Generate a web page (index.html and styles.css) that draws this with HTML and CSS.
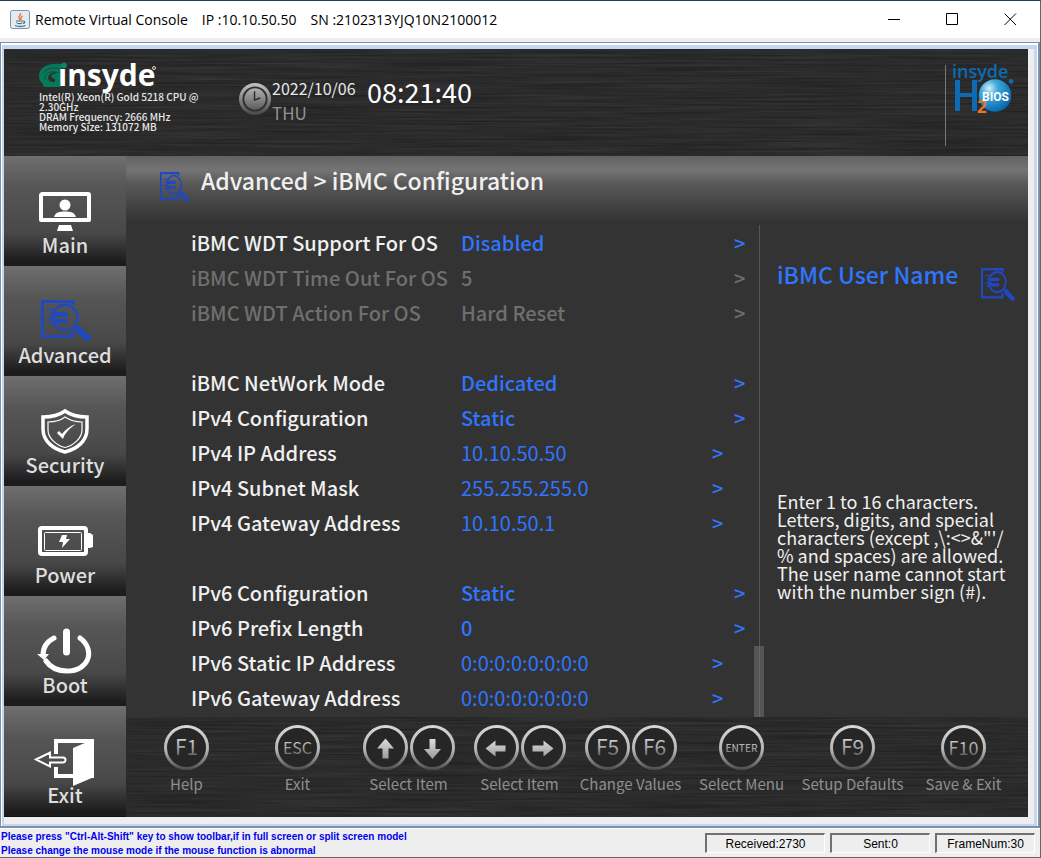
FILE: index.html
```html
<!DOCTYPE html>
<html lang="en">
<head>
<meta charset="utf-8">
<title>Remote Virtual Console</title>
<link rel="stylesheet" href="styles.css">
</head>
<body>
<svg class="defs" aria-hidden="true">
  <defs>
    <linearGradient id="metal" gradientUnits="userSpaceOnUse" x1="0" y1="0" x2="0" y2="46">
      <stop offset="0" stop-color="#d8d8d8"/><stop offset=".55" stop-color="#b4b4b4"/><stop offset=".85" stop-color="#6c6c6c"/><stop offset="1" stop-color="#444"/>
    </linearGradient>
    <linearGradient id="metal-text" gradientUnits="userSpaceOnUse" x1="0" y1="14" x2="0" y2="33">
      <stop offset="0" stop-color="#d0d0d0"/><stop offset=".5" stop-color="#a0a0a0"/><stop offset="1" stop-color="#4c4c4c"/>
    </linearGradient>
    <linearGradient id="metal-arrow" gradientUnits="userSpaceOnUse" x1="0" y1="14" x2="0" y2="38">
      <stop offset="0" stop-color="#ddd"/><stop offset="1" stop-color="#8a8a8a"/>
    </linearGradient>
    <linearGradient id="clock-metal" x1="0" y1="0" x2="0" y2="1">
      <stop offset="0" stop-color="#c4c4c4"/><stop offset="1" stop-color="#484848"/>
    </linearGradient>
    <radialGradient id="ball" cx=".32" cy=".28" r=".75">
      <stop offset="0" stop-color="#d6f2fb"/><stop offset=".35" stop-color="#3fa9dc"/><stop offset="1" stop-color="#0668ae"/>
    </radialGradient>
    <symbol id="search-doc" viewBox="0 0 50 41">
      <path d="M32 5V1.500H1.500V36.500H31.500V31" fill="none" stroke="currentColor" stroke-width="3"/>
      <circle cx="24" cy="17.500" r="12.500" fill="none" stroke="currentColor" stroke-width="2.600"/>
      <path d="M6 9.500H14M8 13.500H16M6 18.500H16M8 22.500H14" fill="none" stroke="currentColor" stroke-width="1.500"/>
      <path d="M13 12H27V16.500H13zM12 19H27V23H14z" fill="currentColor"/>
      <path d="M37 29.500L46.500 38" stroke="currentColor" stroke-width="6.500" stroke-linecap="round"/>
      <path d="M33 25l3 3" stroke="currentColor" stroke-width="2.500"/>
    </symbol>
  </defs>
</svg>
<div class="window">
  <header class="titlebar">
    <svg class="java" viewBox="0 0 20 20" aria-hidden="true">
      <rect x=".5" y=".5" width="19" height="18" rx="2" fill="#e3ebf2" stroke="#7e93a8"/>
      <path d="M10.500 3c1 2-2.500 3-1.500 5l1 2M12.500 6c-2 1-2 2-1.500 4" fill="none" stroke="#e8762c" stroke-width="1.300"/>
      <path d="M6 11h7M6.500 12.500c1 1.500 5 1.500 6 0M13 11c3 0 1.500 2.500 0 2.500M5 15.500c3 1.300 8 1.300 10.500 0" fill="none" stroke="#47708f" stroke-width="1.200"/>
    </svg>
    <h1 class="window-title"><span>Remote Virtual Console</span><span>IP :10.10.50.50</span><span>SN :2102313YJQ10N2100012</span></h1>
    <div class="window-buttons">
      <button type="button" aria-label="Minimize"><svg viewBox="0 0 13 13"><path d="M0 6.500h12"/></svg></button>
      <button type="button" aria-label="Maximize"><svg viewBox="0 0 13 13"><path d="M.5.500h11v11H.5z"/></svg></button>
      <button type="button" aria-label="Close"><svg viewBox="0 0 13 13"><path d="M.5.500l11.500 11.500M12 .500L.5 12"/></svg></button>
    </div>
  </header>

  <div class="frame">
    <div class="console">
      <div class="banner brushed">
        <div class="system">
          <svg class="insyde" viewBox="0 0 120 30" role="img" aria-label="insyde">
            <path d="M24 3.500C14 1.500 0 4 0 15c0 4 2 6 4 8v2l2 1h15V12h-4l-5 2 1 3 3 1v3c-6 1-9-4-5-8 3-2 6-2 9-1z" fill="#057a5b"/>
            <path d="M4 12c4-5 10-6 16-4M6 19c-2-5 3-9 11-8" fill="none" stroke="#24463c" stroke-width="1"/>
            <text class="logo-text" x="19" y="25">ınsyde</text>
            <circle cx="25" cy="4.500" r="2.800" fill="#0a8a68"/>
            <circle cx="115" cy="7" r="1.500" fill="none" stroke="#ddd"/>
          </svg>
          <p>Intel(R) Xeon(R) Gold 5218 CPU @ 2.30GHz<br>DRAM Frequency: 2666 MHz<br>Memory Size: 131072 MB</p>
        </div>
        <div class="clock">
          <svg viewBox="0 0 34 34" aria-hidden="true">
            <circle cx="16.500" cy="17" r="16.500" fill="url(#clock-metal)"/>
            <circle cx="16.500" cy="17" r="12" fill="none" stroke="#303030" stroke-width="2"/>
            <path d="M16 9v9l6-2" fill="none" stroke="#2c2c2c" stroke-width="1.500"/>
          </svg>
          <p class="date">2022/10/06<span>THU</span></p>
          <p class="time">08:21:40</p>
        </div>
        <div class="brand">
          <svg viewBox="0 0 64 56" role="img" aria-label="insyde H2O BIOS">
            <text class="brand-name" x="-1" y="13">insyde</text>
            <circle cx="58" cy="16.500" r="2.400" fill="#0d6ab3"/>
            <path d="M2 15h5v13h12V15h5v31h-5V32H7v14H2z" fill="#0d6ab3"/>
            <circle cx="42" cy="30.500" r="16.300" fill="url(#ball)"/>
            <text class="brand-two" x="24" y="48">2</text>
            <text class="brand-bios" x="29" y="36">BIOS</text>
          </svg>
        </div>
      </div>

      <nav class="menu" aria-label="Setup menu">
        <a href="#main"><svg viewBox="0 0 56 46"><path d="M5 5h46a1 1 0 0 1 1 1v25H4V6z" fill="none" stroke="currentColor" stroke-width="4" stroke-linejoin="round"/><circle cx="28" cy="16" r="5.500" fill="currentColor"/><path d="M17 28c2-5 5-5.500 11-5.500S37 23 39 28zM22 36h12l2 6H20z" fill="currentColor"/></svg>Main</a>
        <a href="#advanced"><svg class="accent" viewBox="-4 -1 56 46"><use href="#search-doc" width="50" height="41"/></svg>Advanced</a>
        <a href="#security"><svg viewBox="0 0 56 46"><path d="M28 2c7 5 14 6 22 6v12c0 12-10 20-22 23C16 40 6 32 6 20V8c8 0 15-1 22-6z" fill="none" stroke="currentColor" stroke-width="3.500"/><path d="M28 8c6 4 11 5 17 5v8c0 8-8 15-17 17.500C19 36 11 29 11 21v-8c6 0 12-1 17-5z" fill="none" stroke="currentColor" stroke-width="1.200"/><path d="M20 24l6 6c2-6 6-10 13-15-6 2-11 6-14 10l-3-3z" fill="currentColor"/></svg>Security</a>
        <a href="#power"><svg viewBox="0 0 56 46"><rect x="3" y="9" width="46" height="26" rx="2" fill="none" stroke="currentColor" stroke-width="4"/><rect x="7.500" y="13.500" width="37" height="18" rx="1" fill="none" stroke="currentColor"/><path d="M50 14h3l3 2v12l-3 1h-3z" fill="currentColor"/><path d="M25 16h5l-1 4h4l-8 9 1-6h-4z" fill="currentColor"/></svg>Power</a>
        <a href="#boot"><svg viewBox="0 0 56 46"><path d="M29.500 3v20" stroke="currentColor" stroke-width="7" stroke-linecap="round"/><path d="M43 9c16 12 9 33-13 33-10 0-17-4-21-10M17 9C9 13 6 18 6 26" fill="none" stroke="currentColor" stroke-width="5" stroke-linecap="round"/><path d="M0 25h12l-5 6z" fill="currentColor"/></svg>Boot</a>
        <a href="#exit"><svg viewBox="0 0 56 46"><path d="M19 15V2h36v37M19 28v9h18" fill="none" stroke="currentColor" stroke-width="4"/><path d="M36 9l21-9v38l-21 9z" fill="currentColor"/><path d="M-1 20.500l14-7v5h13a2 2 0 0 1 0 5H13v4z" fill="none" stroke="currentColor" stroke-width="2"/></svg>Exit</a>
      </nav>

      <main class="page">
        <h2 class="page-title"><svg class="accent" viewBox="0 0 50 41" preserveAspectRatio="none" aria-hidden="true"><use href="#search-doc"/></svg>Advanced &gt; iBMC Configuration</h2>
        <ul class="settings">
          <li><button type="button"><span>iBMC WDT Support For OS</span><b>Disabled</b><i>&gt;</i></button></li>
          <li><button type="button" disabled><span>iBMC WDT Time Out For OS</span><b>5</b><i>&gt;</i></button></li>
          <li><button type="button" disabled><span>iBMC WDT Action For OS</span><b>Hard Reset</b><i>&gt;</i></button></li>
          <li class="group"><button type="button"><span>iBMC NetWork Mode</span><b>Dedicated</b><i>&gt;</i></button></li>
          <li><button type="button"><span>IPv4 Configuration</span><b>Static</b><i>&gt;</i></button></li>
          <li class="field"><button type="button"><span>IPv4 IP Address</span><b>10.10.50.50</b><i>&gt;</i></button></li>
          <li class="field"><button type="button"><span>IPv4 Subnet Mask</span><b>255.255.255.0</b><i>&gt;</i></button></li>
          <li class="field"><button type="button"><span>IPv4 Gateway Address</span><b>10.10.50.1</b><i>&gt;</i></button></li>
          <li class="group"><button type="button"><span>IPv6 Configuration</span><b>Static</b><i>&gt;</i></button></li>
          <li><button type="button"><span>IPv6 Prefix Length</span><b>0</b><i>&gt;</i></button></li>
          <li class="field"><button type="button"><span>IPv6 Static IP Address</span><b>0:0:0:0:0:0:0:0</b><i>&gt;</i></button></li>
          <li class="field"><button type="button"><span>IPv6 Gateway Address</span><b>0:0:0:0:0:0:0:0</b><i>&gt;</i></button></li>
        </ul>
        <aside class="help">
          <div class="scroll-thumb"></div>
          <h3>iBMC User Name<svg class="accent" viewBox="0 0 50 41" preserveAspectRatio="none" aria-hidden="true"><use href="#search-doc"/></svg></h3>
          <p>Enter 1 to 16 characters.<br>Letters, digits, and special<br>characters (except ,\:&lt;&gt;&amp;"'/<br>% and spaces) are allowed.<br>The user name cannot start<br>with the number sign (#).</p>
        </aside>
      </main>

      <footer class="keys brushed">
        <button type="button"><span class="caps"><svg viewBox="0 0 45 45"><circle cx="22.500" cy="22.500" r="21"/><text x="22.500" y="30">F1</text></svg></span>Help</button>
        <button type="button"><span class="caps"><svg viewBox="0 0 45 45"><circle cx="22.500" cy="22.500" r="21"/><text class="mid" x="22.500" y="29">ESC</text></svg></span>Exit</button>
        <button type="button"><span class="caps"><svg viewBox="0 0 45 45"><circle cx="22.500" cy="22.500" r="21"/><path d="M22.500 13.500l8.500 10h-5.500v10h-6v-10H14z"/></svg><svg viewBox="0 0 45 45"><circle cx="22.500" cy="22.500" r="21"/><path d="M22.500 34l8.500-10h-5.500V14h-6v10H14z"/></svg></span>Select Item</button>
        <button type="button"><span class="caps"><svg viewBox="0 0 45 45"><circle cx="22.500" cy="22.500" r="21"/><path d="M11.500 23.500l10-8v5h10v6h-10v5z"/></svg><svg viewBox="0 0 45 45"><circle cx="22.500" cy="22.500" r="21"/><path d="M32.500 23.500l-10-8v5h-11v6h11v5z"/></svg></span>Select Item</button>
        <button type="button"><span class="caps"><svg viewBox="0 0 45 45"><circle cx="22.500" cy="22.500" r="21"/><text x="22.500" y="30">F5</text></svg><svg viewBox="0 0 45 45"><circle cx="22.500" cy="22.500" r="21"/><text x="22.500" y="30">F6</text></svg></span>Change Values</button>
        <button type="button"><span class="caps"><svg viewBox="0 0 45 45"><circle cx="22.500" cy="22.500" r="21"/><text class="small" x="22.500" y="27">ENTER</text></svg></span>Select Menu</button>
        <button type="button"><span class="caps"><svg viewBox="0 0 45 45"><circle cx="22.500" cy="22.500" r="21"/><text x="22.500" y="30">F9</text></svg></span>Setup Defaults</button>
        <button type="button"><span class="caps"><svg viewBox="0 0 45 45"><circle cx="22.500" cy="22.500" r="21"/><text class="wide-cap" x="22.500" y="30">F10</text></svg></span>Save &amp; Exit</button>
      </footer>
    </div>
  </div>

  <footer class="status">
    <p>Please press "Ctrl-Alt-Shift" key to show toolbar,if in full screen or split screen model<br>Please change the mouse mode if the mouse function is abnormal</p>
    <span class="stat wide">Received:2730</span>
    <span class="stat">Sent:0</span>
    <span class="stat">FrameNum:30</span>
  </footer>
</div>
</body>
</html>
```
FILE: styles.css
```css
* { box-sizing: border-box; }
body {
  margin: 0;
  background: #eee;
  font-family: "Noto Sans CJK SC", "Noto Sans", sans-serif;
}
h1, h2, h3, p, ul { margin: 0; padding: 0; font-weight: 400; }
button { border: 0; padding: 0; background: none; color: inherit; font: inherit; }
svg { display: block; overflow: visible; }
.defs { position: absolute; width: 0; height: 0; }
.accent { color: #2048c0; }

.window {
  display: flex;
  flex-direction: column;
  min-height: 100vh;
  border: 1px solid #666;
  border-top-color: #1e4058;
  border-left-width: 0;
}
.titlebar {
  display: flex;
  align-items: center;
  height: 37px;
  padding: 0 1px 0 10px;
  background: #fff;
  color: #000;
}
.java { width: 20px; height: 20px; }
.window-title {
  display: flex;
  flex: 1;
  gap: 14px;
  padding-left: 5px;
  font: 14px/20px "Open Sans", sans-serif;
}
.window-buttons { display: flex; }
.window-buttons button { display: grid; place-items: center; width: 58px; height: 37px; }
.window-buttons svg { width: 13px; height: 13px; fill: none; stroke: #000; }

.frame {
  flex: 1;
  display: flex;
  margin-top: 4px;
  padding: 2px 1px 0 1px;
  border: 1px solid #8090a6;
  border-width: 1px 2px 2px 1px;
  background: #fff;
}
.console {
  flex: 1;
  display: grid;
  grid-template: auto 1fr 100px / 122px 1fr;
  padding: 0 6px 7px 0;
  border: solid #c3d8f0;
  border-width: 4px 3px 2px 2px;
  background: #eee;
}
.brushed {
  background-color: #2b2b2b;
  background-image: url("data:image/svg+xml,%3Csvg xmlns='http://www.w3.org/2000/svg' width='1024' height='108'%3E%3Cfilter id='m' x='0' y='0' width='100%25' height='100%25' color-interpolation-filters='sRGB'%3E%3CfeTurbulence type='fractalNoise' baseFrequency='.008 .5' numOctaves='3' seed='4'/%3E%3CfeColorMatrix values='.11 0 0 0 .113 .11 0 0 0 .113 .11 0 0 0 .113 0 0 0 0 1'/%3E%3C/filter%3E%3Crect width='1024' height='108' filter='url(%23m)'/%3E%3C/svg%3E");
}
.banner {
  grid-column: 1 / -1;
  display: flex;
  height: 107px;
  padding: 12px 0 10px 35px;
  color: #e8e8e8;
}
.system { width: 200px; }
.system p { width: 180px; padding-top: 1px; font-size: 10px; font-weight: 500; line-height: 10px; }
.insyde { width: 120px; height: 30px; }
.logo-text { font: 700 30px "Open Sans", sans-serif; fill: #fff; }
.clock { display: flex; flex: 1; padding-top: 17px; }
.clock svg { width: 33px; height: 34px; margin-top: 4px; }
.date { width: 95px; font-size: 16px; line-height: 20px; }
.date span { display: block; padding-top: 5px; font-size: 17px; color: #929292; }
.time { font-size: 27px; line-height: 28px; color: #fff; }
.brand { width: 83px; margin-top: 4px; padding-left: 7px; border-left: 1px solid #777; }
.brand svg { width: 64px; height: 56px; }
.brand-name { font: 600 18px "Open Sans", sans-serif; fill: #0d6ab3; }
.brand-two { font: 700 17px "Open Sans", sans-serif; fill: #e87424; }
.brand-bios { font: 700 12px Roboto, sans-serif; fill: #fff; }

.menu { grid-row: 2 / 4; display: flex; flex-direction: column; background: #111; }
.menu a {
  display: flex;
  flex-direction: column;
  align-items: center;
  height: 110px;
  padding-top: 33px;
  background: linear-gradient(#6f6f6f, #565656 28%, #484848 70%, #1c1c1c 96%);
  color: #dedede;
  font-size: 20px;
  font-weight: 500;
  line-height: 20px;
  text-decoration: none;
}
.menu svg { width: 56px; height: 46px; color: #fff; }
.menu .accent { color: #2048c0; }

.page {
  display: grid;
  grid-template: 69px 1fr / minmax(0, 633fr) minmax(0, 269fr);
  background: linear-gradient(#626262, #747474 14px, #585858 28px, #333 66px);
  color: #f0f0f0;
}
.page-title {
  grid-column: 1 / -1;
  display: flex;
  align-items: flex-start;
  gap: 12px;
  padding: 10px 0 0 34px;
  font-size: 23px;
  font-weight: 500;
  line-height: 28px;
}
.page-title svg { width: 29px; height: 30px; margin-top: 6px; }
.settings { list-style: none; padding: 0 0 0 65px; }
.settings .group { margin-top: 35px; }
.settings button {
  display: grid;
  grid-template-columns: 270px 1fr 25px;
  width: 100%;
  height: 35px;
  align-items: center;
  text-align: left;
  font-size: 20px;
  font-weight: 500;
  line-height: 34px;
  white-space: nowrap;
}
.settings .field button { grid-template-columns: 270px 1fr 47px; }
.settings b, .settings i { font-weight: 500; font-style: normal; color: #2f76ff; }
.settings .field b { font-weight: 400; }
.settings button:disabled, .settings :disabled b, .settings :disabled i { color: #6f6f6f; }
.help {
  position: relative;
  display: flex;
  flex-direction: column;
  justify-content: space-between;
  padding: 35px 13px 117px 17px;
  border-left: 1px solid #555;
}
.help h3 { display: flex; justify-content: space-between; font-size: 23px; font-weight: 500; line-height: 28px; color: #2f76ff; white-space: nowrap; }
.help h3 svg { width: 34px; height: 33px; margin-top: 8px; }
.help p { font-size: 18px; font-weight: 400; line-height: 18px; white-space: nowrap; }
.scroll-thumb { position: absolute; left: -6px; bottom: 0; width: 10px; height: 71px; background: rgba(120, 120, 120, .5); }

.keys { display: grid; grid-template-columns: repeat(8, 1fr); padding: 8px 9px 0 5px; }
.keys button {
  display: flex;
  flex-direction: column;
  align-items: center;
  gap: 4px;
  color: #8f8f8f;
  font-size: 15px;
  line-height: 20px;
  white-space: nowrap;
}
.caps { display: flex; gap: 2px; }
.caps svg { width: 45px; height: 45px; }
.caps circle { fill: #262626; stroke: url(#metal); stroke-width: 3; }
.caps path { fill: url(#metal-arrow); }
.caps text { font: 21px "Noto Sans CJK SC", sans-serif; text-anchor: middle; fill: url(#metal-text); }
.caps .wide-cap { font-size: 18px; }
.caps .mid { font-size: 16px; }
.caps .small { font-size: 10px; font-weight: 500; }

.status {
  display: flex;
  gap: 5px;
  height: 29px;
  padding: 4px 5px 3px 1px;
  border-top: 1px solid #fff;
  font-family: "Liberation Sans", sans-serif;
}
.status p { flex: 1; margin-top: -3px; font-weight: 700; font-size: 10px; line-height: 14px; color: #0000f0; white-space: nowrap; }
.stat {
  width: 100px;
  height: 20px;
  border: solid #707070;
  border-width: 2px 1px 1px 2px;
  border-right-color: #fff;
  border-bottom-color: #fff;
  font-size: 12px;
  line-height: 18px;
  text-align: center;
  color: #000;
}
.wide { width: 120px; }
```
